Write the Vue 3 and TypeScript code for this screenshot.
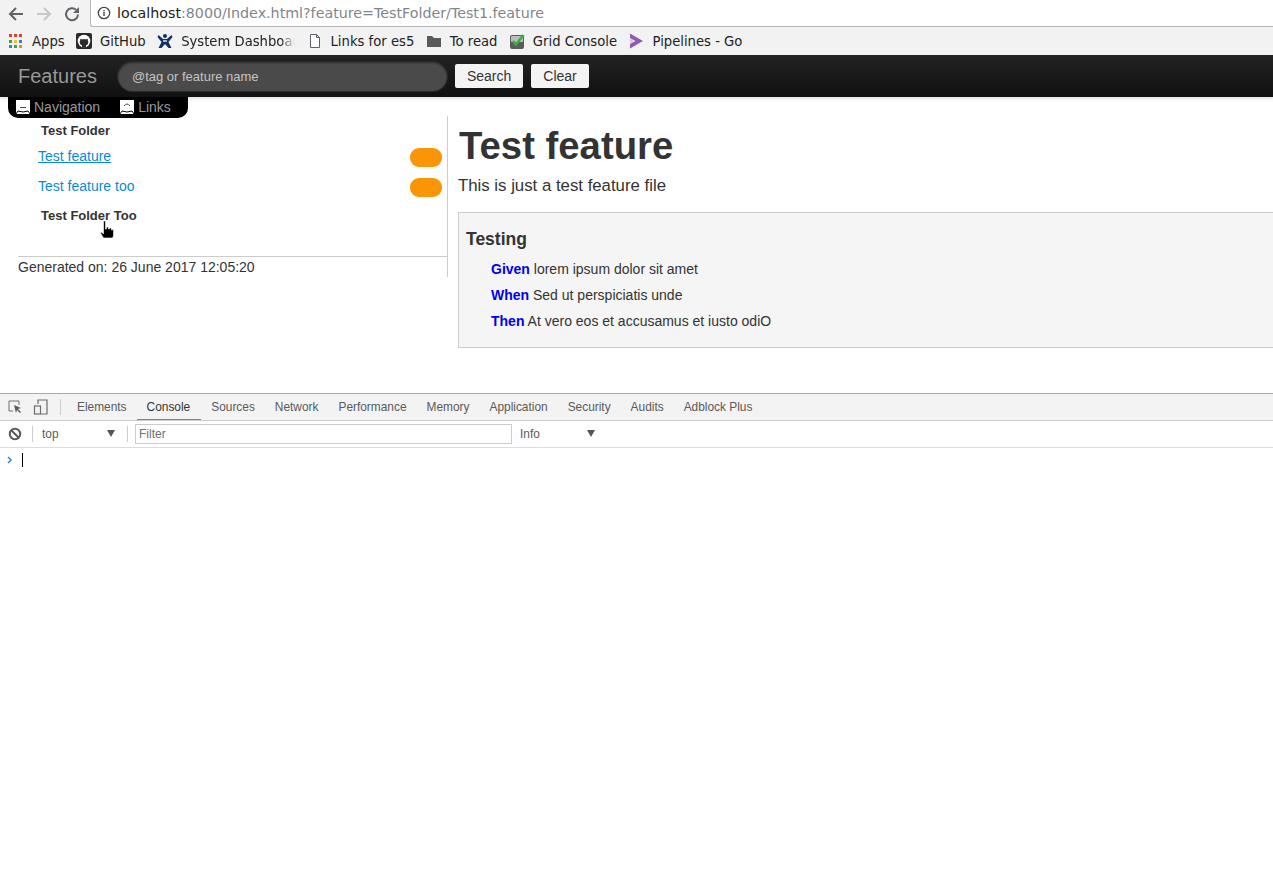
<script setup lang="ts">
// static recreation of a feature report page with the browser chrome round it
const bookmarks = [
  { id: 'apps', label: 'Apps' },
  { id: 'github', label: 'GitHub' },
  { id: 'dash', label: 'System Dashboard' },
  { id: 'doc', label: 'Links for es5' },
  { id: 'folder', label: 'To read' },
  { id: 'grid', label: 'Grid Console' },
  { id: 'pipe', label: 'Pipelines - Go' }
];
const appsColors = ['#e53935', '#e53935', '#e53935', '#43a047', '#fbc02d', '#1e88e5', '#1e88e5', '#43a047', '#fb8c00'];
const tabs = ['Elements', 'Console', 'Sources', 'Network', 'Performance', 'Memory', 'Application', 'Security', 'Audits', 'Adblock Plus'];
const steps = [
  { key: 'Given', text: 'lorem ipsum dolor sit amet' },
  { key: 'When', text: 'Sed ut perspiciatis unde' },
  { key: 'Then', text: 'At vero eos et accusamus et iusto odiO' }
];
</script>

<template>
  <div class="page">
    <div class="addressbar">
      <svg class="nav-icon" viewBox="0 0 18 18"><path d="M16 9H3.500M9 3 3 9l6 6" fill="none" stroke="#5f6368" stroke-width="2" /></svg>
      <svg class="nav-icon" viewBox="0 0 18 18"><path d="M2 9h12.500M9 3l6 6-6 6" fill="none" stroke="#c4c6c8" stroke-width="2" /></svg>
      <svg class="nav-icon" viewBox="0 0 18 18"><path d="M15 9.500a6 6 0 1 1-1.800-4.600" fill="none" stroke="#5f6368" stroke-width="2" /><path d="M16 2v6h-6z" fill="#5f6368" /></svg>
      <div class="omnibox">
        <svg class="info" viewBox="0 0 14 14"><circle cx="7" cy="7" r="5.700" fill="none" stroke="#444" stroke-width="1.300" /><path d="M7 6v4M7 4v1.300" stroke="#444" stroke-width="1.400" /></svg>
        <span class="host">localhost</span><span class="url">:8000/Index.html?feature=TestFolder/Test1.feature</span>
      </div>
    </div>

    <div class="bookmarks">
      <div v-for="b in bookmarks" :key="b.id" class="bookmark" :class="'bm-' + b.id">
        <span v-if="b.id === 'apps'" class="apps-grid">
          <i v-for="(c, n) in appsColors" :key="n" :style="{ background: c }"></i>
        </span>
        <svg v-else-if="b.id === 'github'" class="bm-icon" viewBox="0 0 16 16">
          <rect width="16" height="16" rx="2" fill="#2a2a2a" />
          <circle cx="8" cy="8" r="6.300" fill="#fff" />
          <path d="M6 14.500v-2.300c-.9-.2-2.300-.8-2.300-3.200 0-.7.200-1.300.6-1.700-.1-.4-.1-1 .1-1.500.6 0 1.200.3 1.600.6a6 6 0 0 1 4 0c.4-.3 1-.6 1.600-.6.2.5.2 1.100.1 1.500.4.400.6 1 .6 1.700 0 2.400-1.400 3-2.300 3.200v2.300z" fill="#2a2a2a" />
        </svg>
        <svg v-else-if="b.id === 'dash'" class="bm-icon" viewBox="0 0 16 16">
          <circle cx="8" cy="3" r="2" fill="#14315f" />
          <path d="M1.500 2l4.500 4h4l4.500-4 1 2-4 5 3 6h-3L8 11l-3.500 4h-3l3-6-4-5z" fill="#14315f" />
          <path d="M6 7h4v2H6z" fill="#9fb6d6" />
        </svg>
        <svg v-else-if="b.id === 'doc'" class="bm-icon" viewBox="0 0 16 16">
          <path d="M3.500 1.500h6l3 3v10h-9zM9.500 1.500v3h3" fill="#fff" stroke="#5f6368" stroke-width="1" />
        </svg>
        <svg v-else-if="b.id === 'folder'" class="bm-icon" viewBox="0 0 16 16">
          <path d="M1 3h5l2 2h7v9H1z" fill="#5a5a5a" />
        </svg>
        <svg v-else-if="b.id === 'grid'" class="bm-icon" viewBox="0 0 16 16">
          <rect x="1" y="2" width="14" height="14" rx="2" fill="#5c5c5c" />
          <rect x="2" y="3" width="12" height="6" rx="1" fill="#bdbdbd" />
          <path d="M4 8l3 3.500L14.500 2" fill="none" stroke="#3fae3f" stroke-width="2.600" />
        </svg>
        <svg v-else class="bm-icon" viewBox="0 0 16 16">
          <path d="M2 .5 15 8 2 15.500V11l5.500-3L2 5z" fill="#8e5bb0" />
          <path d="M2 5.500 6 8l-4 2.500z" fill="#d9c6e6" />
        </svg>
        <span class="bm-label">{{ b.label }}</span>
      </div>
    </div>

    <header class="topbar">
      <span class="brand">Features</span>
      <input class="search" placeholder="@tag or feature name" />
      <button class="btn">Search</button>
      <button class="btn">Clear</button>
    </header>

    <div class="viewport">
      <div class="tabs-pill">
        <span class="pill-item">
          <svg class="pill-icon" viewBox="0 0 14 14"><rect width="14" height="14" fill="#fff" /><path d="M4 7.500h6" stroke="#444" stroke-width="1" /><path d="M0 14l2-3M14 14l-2-3M2 11q5 2 10 0" fill="none" stroke="#000" stroke-width="1" /></svg>
          Navigation
        </span>
        <span class="pill-item">
          <svg class="pill-icon" viewBox="0 0 14 14"><rect width="14" height="14" fill="#fff" /><path d="M4 6q3-4 6 0" fill="none" stroke="#444" stroke-width="1" /><path d="M0 14l2-3M14 14l-2-3M2 11q5 2 10 0" fill="none" stroke="#000" stroke-width="1" /></svg>
          Links
        </span>
      </div>

      <div class="columns">
        <aside class="sidebar">
          <div class="folder first">Test Folder</div>
          <div class="feature-row">
            <a class="feature-link current">Test feature</a>
            <span class="badge"></span>
          </div>
          <div class="feature-row">
            <a class="feature-link">Test feature too</a>
            <span class="badge"></span>
          </div>
          <div class="folder">Test Folder Too</div>
          <svg class="cursor" viewBox="0 0 16 20">
            <path d="M4 1h2v8h1V7h2v2h1V8h2v2h1V9h1v7l-1 2H4l-3-5 1-1 2 2z" fill="#000" stroke="#fff" stroke-width=".6" />
          </svg>
          <div class="generated">Generated on: 26 June 2017 12:05:20</div>
        </aside>

        <main class="content">
          <h1>Test feature</h1>
          <p class="description">This is just a test feature file</p>
          <section class="scenario">
            <h3>Testing</h3>
            <div v-for="s in steps" :key="s.key" class="step">
              <b>{{ s.key }}</b> {{ s.text }}
            </div>
          </section>
        </main>
      </div>
    </div>

    <div class="devtools">
      <div class="dt-tabs">
        <svg class="dt-icon" viewBox="0 0 16 16"><path d="M6 12H2V2h10v4" fill="none" stroke="#6e6e6e" stroke-width="1" /><path d="M7 6l7 3-3 1 3 3-1 1-3-3-1 3z" fill="#5a5a5a" /></svg>
        <svg class="dt-icon" viewBox="0 0 16 16"><path d="M5 5V1h9v14H8" fill="none" stroke="#6e6e6e" stroke-width="1.200" /><rect x="1.500" y="7" width="6" height="8" fill="none" stroke="#6e6e6e" stroke-width="1.200" /></svg>
        <span class="dt-sep"></span>
        <span v-for="t in tabs" :key="t" class="dt-tab" :class="{ active: t === 'Console' }">{{ t }}</span>
      </div>
      <div class="dt-filter">
        <svg class="block-icon" viewBox="0 0 14 14"><circle cx="7" cy="7" r="5.200" fill="none" stroke="#5a5a5a" stroke-width="2" /><path d="M3.500 3.500l7 7" stroke="#5a5a5a" stroke-width="2" /></svg>
        <span class="filter-sep"></span>
        <span class="select ctx">top<i class="caret"></i></span>
        <span class="filter-sep"></span>
        <input class="filter-input" placeholder="Filter" />
        <span class="select level">Info<i class="caret"></i></span>
      </div>
      <div class="prompt">
        <svg class="chevron" viewBox="0 0 6 8"><path d="M1 1l3 3-3 3" fill="none" stroke="#3b78e7" stroke-width="1.400" /></svg>
        <span class="caret-line"></span>
      </div>
    </div>
  </div>
</template>

<style>
html,
body {
  margin: 0;
  background: #fff;
  overflow: hidden;
}
</style>

<style scoped>
.page {
  width: 1273px;
  height: 881px;
  overflow: hidden;
  font-family: 'Liberation Sans', Arial, sans-serif;
  color: #333;
}

.addressbar {
  height: 27px;
  background: #f2f2f2;
  display: flex;
  align-items: center;
  padding-left: 7px;
  box-sizing: border-box;
}

.nav-icon {
  width: 18px;
  height: 18px;
  margin-right: 10px;
  flex: none;
}

.nav-icon:nth-child(3) {
  margin-right: 9px;
}

.omnibox {
  flex: 1;
  height: 27px;
  margin-top: -1px;
  background: #fff;
  border: 1px solid #b5b5b5;
  border-top: none;
  border-right: none;
  border-radius: 0 0 0 3px;
  box-sizing: border-box;
  display: flex;
  align-items: center;
  padding-left: 6px;
  font-family: 'DejaVu Sans', sans-serif;
  font-size: 14.26px;
}

.info {
  width: 14px;
  height: 14px;
  margin-right: 6px;
  flex: none;
}

.host {
  color: #222;
}

.url {
  color: #80868b;
}

.bookmarks {
  height: 28px;
  background: #f2f2f2;
  display: flex;
  align-items: center;
  font-family: 'DejaVu Sans', sans-serif;
  font-size: 13.2px;
  color: #222;
  padding-left: 9px;
  box-sizing: border-box;
}

.bookmark {
  display: flex;
  align-items: center;
  flex: none;
  margin-right: 11.400px;
}

.bm-dash .bm-label {
  width: 114px;
  overflow: hidden;
  white-space: nowrap;
  -webkit-mask-image: linear-gradient(90deg, #000 88%, transparent);
  mask-image: linear-gradient(90deg, #000 88%, transparent);
}

.apps-grid {
  display: grid;
  grid-template-columns: repeat(3, 3px);
  gap: 2.500px 2px;
  width: 13px;
  margin-right: 10px;
}

.apps-grid i {
  width: 3px;
  height: 3px;
}

.bm-icon {
  width: 16px;
  height: 16px;
  margin-right: 8px;
  flex: none;
}

.topbar {
  height: 42px;
  background: linear-gradient(#222, #111);
  display: flex;
  align-items: center;
  box-sizing: border-box;
  padding-left: 18px;
  box-shadow: 0 2px 3px rgba(0, 0, 0, 0.12);
  position: relative;
}

.brand {
  font-size: 20px;
  color: #999;
  margin-right: 21px;
}

.search {
  width: 329px;
  height: 29px;
  box-sizing: border-box;
  border: none;
  border-radius: 15px;
  background: #4a4a4a;
  box-shadow: 0 0 0 1px #2a2a2a, inset 0 1px 2px rgba(0, 0, 0, 0.4);
  padding: 0 14px;
  font-family: inherit;
  font-size: 13px;
  color: #ccc;
  margin-right: 8px;
}

.search::placeholder {
  color: #c4c4c4;
  opacity: 1;
}

.btn {
  height: 24px;
  padding: 0 12px;
  margin-right: 8px;
  border: none;
  border-radius: 2px;
  background: #f4f4f4;
  color: #333;
  font-family: inherit;
  font-size: 14px;
}

.viewport {
  height: 296px;
  box-sizing: border-box;
}

.tabs-pill {
  display: flex;
  width: 180px;
  height: 21px;
  margin-left: 8px;
  padding: 0 0 1px 8px;
  box-sizing: border-box;
  background: #000;
  border-radius: 0 0 10px 10px;
  color: #999;
  font-size: 14px;
  line-height: 20px;
}

.pill-item {
  display: flex;
  align-items: center;
  gap: 4px;
  margin-right: 20px;
}

.pill-icon {
  width: 14px;
  height: 14px;
  flex: none;
}

.columns {
  display: flex;
}

.sidebar {
  width: 430px;
  height: 161px;
  margin-left: 18px;
  box-sizing: border-box;
  border-right: 1px solid #ccc;
  font-size: 14px;
  position: relative;
  margin-top: -2px;
  flex: none;
}

.folder {
  font-size: 13px;
  font-weight: bold;
  line-height: 16px;
  padding-left: 23px;
  height: 16px;
  margin-top: 6px;
}

.folder.first {
  margin-top: 7px;
}

.feature-row {
  display: flex;
  justify-content: space-between;
  align-items: center;
  height: 30px;
  padding: 0 5px 0 20px;
}

.feature-row:nth-child(2) {
  margin-top: 4px;
  height: 29px;
}

.feature-link {
  color: #0a8ad6;
  position: relative;
  top: -1px;
}

.feature-link.current {
  top: -2px;
  text-decoration: underline;
}

.badge {
  width: 32px;
  height: 19px;
  border-radius: 9px;
  background: #fb9508;
}

.cursor {
  position: absolute;
  left: 81px;
  top: 104px;
  width: 17px;
  height: 20px;
}

.generated {
  border-top: 1px solid #ccc;
  margin-top: 32px;
  padding-top: 2px;
  line-height: 16px;
}

.content {
  flex: 1;
  min-width: 0;
  margin-left: 10px;
}

h1 {
  margin: 6px 0 0 1px;
  font-size: 38.300px;
  line-height: 44px;
  font-weight: bold;
  color: #333;
}

.description {
  margin: 8px 0 0;
  font-size: 16.800px;
  line-height: 20px;
}

.scenario {
  margin-top: 16px;
  height: 136px;
  width: 900px;
  box-sizing: border-box;
  background: #f5f5f5;
  border: 1px solid #ccc;
  padding: 16px 0 0 7px;
}

h3 {
  margin: 0 0 7px;
  font-size: 17.500px;
  line-height: 20px;
  font-weight: bold;
}

.step {
  padding-left: 25px;
  font-size: 14px;
  line-height: 26px;
}

.step b {
  color: #0000f0;
}

.devtools {
  border-top: 1px solid #aaa;
  color: #5a5a5a;
  font-size: 11.900px;
}

.dt-tabs {
  height: 26px;
  background: #f3f3f3;
  border-bottom: 1px solid #ccc;
  display: flex;
  align-items: center;
  padding-left: 7px;
}

.dt-icon {
  width: 16px;
  height: 16px;
  margin-right: 10px;
  flex: none;
}

.dt-sep {
  width: 1px;
  height: 16px;
  background: #ccc;
  margin: 0 6px 0 1px;
}

.dt-tab {
  height: 26px;
  line-height: 26px;
  padding: 0 10px;
  box-sizing: border-box;
}

.dt-tab.active {
  color: #333;
  padding-right: 11px;
  border-bottom: 1px solid #4a8af4;
}

.dt-filter {
  height: 26px;
  border-bottom: 1px solid #ddd;
  display: flex;
  align-items: center;
  padding-left: 8px;
}

.block-icon {
  width: 14px;
  height: 14px;
  margin-right: 10px;
}

.filter-sep {
  width: 1px;
  height: 16px;
  background: #ccc;
}

.select {
  position: relative;
  display: block;
  padding-left: 9px;
  box-sizing: border-box;
}

.ctx {
  width: 94px;
}

.level {
  padding-left: 8px;
}

.caret {
  position: absolute;
  top: 3px;
  width: 0;
  height: 0;
  border-left: 4px solid transparent;
  border-right: 4px solid transparent;
  border-top: 7px solid #555;
}

.ctx .caret {
  left: 74px;
}

.level .caret {
  left: 75px;
}

.filter-input {
  width: 377px;
  height: 20px;
  margin-left: 7px;
  box-sizing: border-box;
  border: 1px solid #ccc;
  padding: 0 3px;
  font-family: inherit;
  font-size: 12px;
}

.filter-input::placeholder {
  color: #6f6f6f;
  opacity: 1;
}

.prompt {
  display: flex;
  align-items: center;
  padding: 5px 0 0 7px;
  height: 14px;
}

.chevron {
  width: 6px;
  height: 8px;
  margin-right: 9px;
}

.caret-line {
  width: 1px;
  height: 14px;
  background: #000;
}
</style>
